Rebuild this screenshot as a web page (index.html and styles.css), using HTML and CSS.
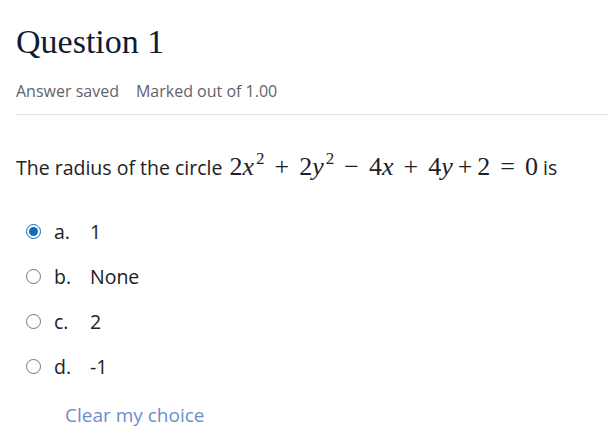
FILE: index.html
```html
<!DOCTYPE html>
<html lang="en">
<head>
    <meta charset="UTF-8">
    <meta name="viewport" content="width=device-width, initial-scale=1.0">
    <title>Question 1</title>
    <link rel="stylesheet" href="styles.css">
</head>
<body>
    <div class="que">
        <h3 class="qno">Question 1</h3>
        <div class="info">
            <span class="state">Answer saved</span>
            <span class="grade">Marked out of 1.00</span>
        </div>

        <div class="qtext">
            The radius of the circle
            <span class="math">2<i>x</i><sup>2</sup><b>+</b>2<i>y</i><sup>2</sup><b>&minus;</b>4<i>x</i><b>+</b>4<i>y</i><b class="tight">+</b>2<b>=</b>0</span>
            is
        </div>

        <div class="answer">
            <label class="choice">
                <input type="radio" name="q1" checked>
                <span class="letter">a.</span>
                <span class="text">1</span>
            </label>
            <label class="choice">
                <input type="radio" name="q1">
                <span class="letter">b.</span>
                <span class="text">None</span>
            </label>
            <label class="choice">
                <input type="radio" name="q1">
                <span class="letter">c.</span>
                <span class="text">2</span>
            </label>
            <label class="choice">
                <input type="radio" name="q1">
                <span class="letter">d.</span>
                <span class="text">-1</span>
            </label>
        </div>

        <a class="clear" href="#">Clear my choice</a>
    </div>
</body>
</html>
```

FILE: styles.css
```css
body {
    margin: 0;
    background-color: #fff;
    color: #1d2125;
    font-family: "Open Sans", sans-serif;
}

.que {
    padding: 0 0 0 16px;
}

.qno {
    margin: 0;
    padding-top: 22px;
    font-family: "Liberation Serif", serif;
    font-weight: normal;
    font-size: 34px;
    line-height: 40px;
    color: #0f1b33;
}

.info {
    display: flex;
    gap: 17px;
    margin-top: 18px;
    padding-bottom: 12px;
    border-bottom: 1px solid #e3e3e3;
    font-size: 16px;
    line-height: 22px;
    color: #5f6368;
}

.qtext {
    margin-top: 38px;
    font-size: 19.5px;
    line-height: 28px;
}

.math {
    font-family: "Liberation Serif", serif;
    font-size: 26px;
    margin-left: 2px;
}

.math i {
    font-style: italic;
}

.math sup {
    font-size: 17px;
    vertical-align: 11px;
    line-height: 0;
    padding-left: 2px;
}

.math b {
    font-weight: normal;
    padding: 0 10px;
}

.math b.tight {
    padding: 0 5px;
}

.answer {
    display: flex;
    flex-direction: column;
    margin-top: 27px;
    padding-left: 10px;
}

.choice {
    display: flex;
    align-items: center;
    height: 45px;
    font-size: 19.5px;
}

.choice input {
    margin: 0;
    width: 15px;
    height: 15px;
    accent-color: #0f6cbf;
}

.letter {
    margin-left: 13px;
    width: 36px;
}

.clear {
    display: inline-block;
    margin: 13px 0 0 49px;
    font-size: 19px;
    color: #6a8fcc;
    text-decoration: none;
}
```
